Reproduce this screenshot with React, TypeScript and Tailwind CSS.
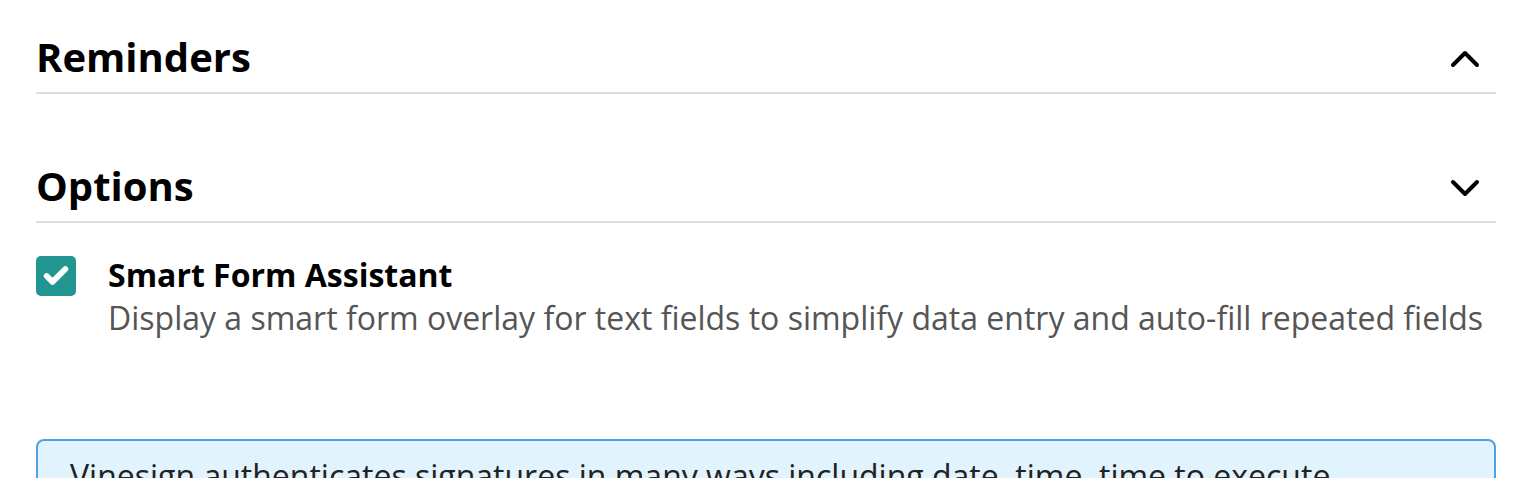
import { Check } from "lucide-react";

const Chevron = ({ up }: { up?: boolean }) => (
  <svg width="30" height="20" viewBox="0 0 30 20" fill="none" className="mt-[4px] shrink-0">
    <path
      d={up ? "M3 16 L15 4 L27 16" : "M3 4 L15 16 L27 4"}
      stroke="#000"
      strokeWidth="4"
      strokeLinecap="round"
      strokeLinejoin="round"
    />
  </svg>
);

interface SectionHeaderProps {
  title: string;
  open?: boolean;
}

const SectionHeader = ({ title, open }: SectionHeaderProps) => {
  return (
    <div className="flex h-[72px] items-center justify-between border-b-2 border-[#dedede] pr-[16px]">
      <h2 className="text-[40px] font-bold leading-none text-black">{title}</h2>
      <Chevron up={open} />
    </div>
  );
};

export default function App() {
  return (
    <div
      className="h-[478px] overflow-hidden bg-white pl-[36px] pr-[44px] pt-[22px]"
      style={{ fontFamily: '"Open Sans", "Noto Sans", sans-serif' }}
    >
      <SectionHeader title="Reminders" open />

      <div className="mt-[57px]">
        <SectionHeader title="Options" />
      </div>

      <div className="mt-[33px] flex items-start gap-[32px]">
        <div className="flex h-[40px] w-[40px] shrink-0 items-center justify-center rounded-[5px] bg-[#21958f]">
          <Check size={28} strokeWidth={5} color="#fff" />
        </div>
        <div className="-mt-[2px]">
          <div className="text-[32px] font-bold leading-[42px] text-black">Smart Form Assistant</div>
          <div className="text-[32px] leading-[44px] text-[#555]">
            Display a smart form overlay for text fields to simplify data entry and auto-fill repeated fields
          </div>
        </div>
      </div>

      <div className="mt-[99px] rounded-[8px] border-2 border-[#4aa3e4] bg-[#e1f3fd] px-[32px] pt-[13px] pb-[13px]">
        <p className="max-w-[1300px] text-[32px] leading-[44px] text-[#222]">
          Vinesign authenticates signatures in many ways including date, time, time to execute,
          location and IP address.
        </p>
      </div>
    </div>
  );
}
